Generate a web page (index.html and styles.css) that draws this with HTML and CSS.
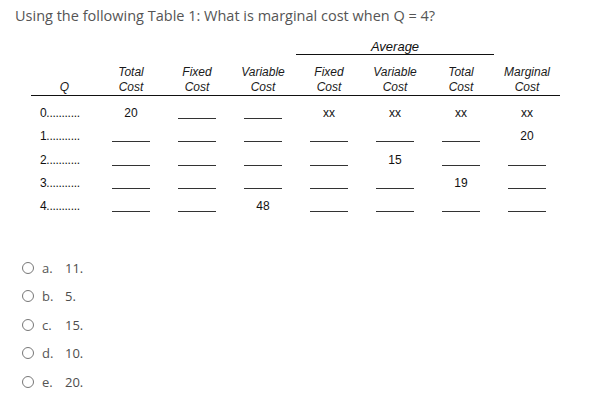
FILE: index.html
```html
<!DOCTYPE html>
<html>
<head>
<meta charset="utf-8">
<link rel="stylesheet" href="styles.css">
</head>
<body>
<div class="page">
  <p class="question">Using the following Table 1: What is marginal cost when Q = 4?</p>
  <div class="cost-table">
    <div class="avg-row">
      <div class="avg-spacer"></div>
      <div class="avg-cell">Average</div>
    </div>
    <div class="head-row">
      <div class="hcell">Q</div>
      <div class="hcell">Total<br>Cost</div>
      <div class="hcell">Fixed<br>Cost</div>
      <div class="hcell">Variable<br>Cost</div>
      <div class="hcell">Fixed<br>Cost</div>
      <div class="hcell">Variable<br>Cost</div>
      <div class="hcell">Total<br>Cost</div>
      <div class="hcell">Marginal<br>Cost</div>
    </div>
    <div class="row">
      <div class="qcell">0...........</div>
      <div class="cell">20</div>
      <div class="cell"><span class="blank"></span></div>
      <div class="cell"><span class="blank"></span></div>
      <div class="cell">xx</div>
      <div class="cell">xx</div>
      <div class="cell">xx</div>
      <div class="cell">xx</div>
    </div>
    <div class="row">
      <div class="qcell">1...........</div>
      <div class="cell"><span class="blank"></span></div>
      <div class="cell"><span class="blank"></span></div>
      <div class="cell"><span class="blank"></span></div>
      <div class="cell"><span class="blank"></span></div>
      <div class="cell"><span class="blank"></span></div>
      <div class="cell"><span class="blank"></span></div>
      <div class="cell">20</div>
    </div>
    <div class="row">
      <div class="qcell">2...........</div>
      <div class="cell"><span class="blank"></span></div>
      <div class="cell"><span class="blank"></span></div>
      <div class="cell"><span class="blank"></span></div>
      <div class="cell"><span class="blank"></span></div>
      <div class="cell">15</div>
      <div class="cell"><span class="blank"></span></div>
      <div class="cell"><span class="blank"></span></div>
    </div>
    <div class="row">
      <div class="qcell">3...........</div>
      <div class="cell"><span class="blank"></span></div>
      <div class="cell"><span class="blank"></span></div>
      <div class="cell"><span class="blank"></span></div>
      <div class="cell"><span class="blank"></span></div>
      <div class="cell"><span class="blank"></span></div>
      <div class="cell">19</div>
      <div class="cell"><span class="blank"></span></div>
    </div>
    <div class="row">
      <div class="qcell">4...........</div>
      <div class="cell"><span class="blank"></span></div>
      <div class="cell"><span class="blank"></span></div>
      <div class="cell">48</div>
      <div class="cell"><span class="blank"></span></div>
      <div class="cell"><span class="blank"></span></div>
      <div class="cell"><span class="blank"></span></div>
      <div class="cell"><span class="blank"></span></div>
    </div>
  </div>
  <div class="options">
    <label class="option"><span class="radio"></span><span class="letter">a.</span><span class="answer">11.</span></label>
    <label class="option"><span class="radio"></span><span class="letter">b.</span><span class="answer">5.</span></label>
    <label class="option"><span class="radio"></span><span class="letter">c.</span><span class="answer">15.</span></label>
    <label class="option"><span class="radio"></span><span class="letter">d.</span><span class="answer">10.</span></label>
    <label class="option"><span class="radio"></span><span class="letter">e.</span><span class="answer">20.</span></label>
  </div>
</div>
</body>
</html>
```

FILE: styles.css
```css
html, body {
  margin: 0;
  padding: 0;
  background: #ffffff;
}

.page {
  padding: 6px 15px 0 15px;
  font-family: "Open Sans", "Liberation Sans", sans-serif;
  color: #555555;
}

.question {
  margin: 0;
  font-size: 14.5px;
  line-height: 20px;
  color: #555555;
}

.cost-table {
  margin: 14px 0 0 16px;
  width: 529px;
  font-family: "Liberation Sans", Arial, sans-serif;
  color: #111111;
}

.avg-row,
.head-row,
.row {
  display: grid;
  grid-template-columns: 67px repeat(7, 66px);
}

.avg-spacer {
  grid-column: 1 / 5;
}

.avg-cell {
  grid-column: 5 / 8;
  text-align: center;
  font-style: italic;
  font-size: 13px;
  line-height: 14px;
  border-bottom: 1px solid #111111;
}

.head-row {
  margin-top: 10px;
  border-bottom: 1px solid #111111;
}

.hcell {
  display: flex;
  flex-direction: column;
  justify-content: flex-end;
  text-align: center;
  font-style: italic;
  font-size: 12px;
  line-height: 15px;
  color: #1a1a1a;
}

.row {
  height: 23.25px;
}

.head-row + .row {
  margin-top: 6px;
}

.qcell,
.cell {
  font-size: 12px;
  line-height: 23.25px;
  height: 23.25px;
}

.qcell {
  padding-left: 9px;
  letter-spacing: -0.3px;
}

.cell {
  text-align: center;
}

.blank {
  display: inline-block;
  width: 38px;
  height: 0;
  border-bottom: 1px solid #333333;
  vertical-align: -2px;
}

.options {
  margin: 35px 0 0 7px;
  display: flex;
  flex-direction: column;
}

.option {
  display: flex;
  align-items: center;
  height: 28.5px;
  font-size: 13px;
  color: #555555;
}

.radio {
  width: 10px;
  height: 10px;
  border: 1px solid #777777;
  border-radius: 50%;
  margin-right: 8px;
}

.letter {
  width: 23px;
}

.answer {
  color: #4d4d4d;
}
```
